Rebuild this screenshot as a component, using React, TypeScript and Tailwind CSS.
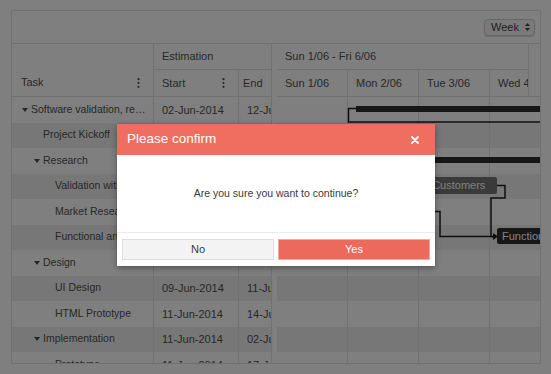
import React from "react";

type Row = {
  name: string;
  level: 0 | 1 | 2;
  parent: boolean;
  start: string;
  end: string;
};

const rows: Row[] = [
  { name: "Software validation, research and implementation", level: 0, parent: true, start: "02-Jun-2014", end: "12-Jun-2014" },
  { name: "Project Kickoff", level: 1, parent: false, start: "02-Jun-2014", end: "02-Jun-2014" },
  { name: "Research", level: 1, parent: true, start: "02-Jun-2014", end: "07-Jun-2014" },
  { name: "Validation with Customers", level: 2, parent: false, start: "02-Jun-2014", end: "04-Jun-2014" },
  { name: "Market Research", level: 2, parent: false, start: "02-Jun-2014", end: "03-Jun-2014" },
  { name: "Functional and Technical Specifications", level: 2, parent: false, start: "04-Jun-2014", end: "07-Jun-2014" },
  { name: "Design", level: 1, parent: true, start: "", end: "" },
  { name: "UI Design", level: 2, parent: false, start: "09-Jun-2014", end: "11-Jun-2014" },
  { name: "HTML Prototype", level: 2, parent: false, start: "11-Jun-2014", end: "14-Jun-2014" },
  { name: "Implementation", level: 1, parent: true, start: "11-Jun-2014", end: "02-Jul-2014" },
  { name: "Prototype", level: 2, parent: false, start: "11-Jun-2014", end: "17-Jun-2014" },
];

const indent: Record<number, string> = {
  0: "pl-[10px]",
  1: "pl-[22px]",
  2: "pl-[34px]",
};

function Kebab() {
  return (
    <svg width="3" height="10" viewBox="0 0 3 10" className="shrink-0">
      <circle cx="1.5" cy="1.2" r="1.1" fill="#4a4a4a" />
      <circle cx="1.5" cy="5" r="1.1" fill="#4a4a4a" />
      <circle cx="1.5" cy="8.8" r="1.1" fill="#4a4a4a" />
    </svg>
  );
}

function Caret() {
  return (
    <svg width="6" height="4" viewBox="0 0 6 4" className="shrink-0">
      <path d="M0 0 L6 0 L3 4 Z" fill="#4a4a4a" />
    </svg>
  );
}

const days = ["Sun 1/06", "Mon 2/06", "Tue 3/06", "Wed 4/06"];

export default function App() {
  return (
    <div
      className="relative w-[551px] h-[374px] overflow-hidden bg-white text-[11px] text-[#505050]"
      style={{ fontFamily: '"Liberation Sans", Arial, sans-serif' }}
    >
      <div className="pt-[10px] pl-[11px] pr-[10px]">
        <div className="h-[354px] border border-[#e2e2e2] flex flex-col overflow-hidden">
          {/* toolbar */}
          <div className="h-[33px] shrink-0 border-b border-[#e2e2e2] flex items-center justify-end pr-[5px]">
            <div className="w-[51px] h-[17px] rounded-[4px] border border-[#cfcfcf] bg-[#f4f4f4] shadow-[0_1px_1px_rgba(0,0,0,0.15)] flex items-center justify-between pl-[6px] pr-[4px] text-[11px] text-[#444]">
              <span>Week</span>
              <svg width="5" height="8" viewBox="0 0 5 8">
                <path d="M0 3 L2.5 0 L5 3 Z" fill="#444" />
                <path d="M0 5 L2.5 8 L5 5 Z" fill="#444" />
              </svg>
            </div>
          </div>

          <div className="flex flex-1 overflow-hidden">
            {/* grid pane */}
            <div className="w-[259px] shrink-0 overflow-hidden flex flex-col">
              <div className="h-[53px] shrink-0 flex border-b border-[#e2e2e2] w-[400px]">
                <div className="w-[142px] shrink-0 border-r border-[#e2e2e2] flex items-end">
                  <div className="h-[27px] w-full flex items-center justify-between pl-[9px] pr-[13px]">
                    <span>Task</span>
                    <Kebab />
                  </div>
                </div>
                <div className="flex flex-col">
                  <div className="h-[26px] border-b border-[#e2e2e2] flex items-center pl-[8px] w-[258px]">
                    Estimation
                  </div>
                  <div className="h-[27px] flex">
                    <div className="w-[85px] border-r border-[#e2e2e2] flex items-center justify-between pl-[8px] pr-[13px]">
                      <span>Start</span>
                      <Kebab />
                    </div>
                    <div className="w-[85px] border-r border-[#e2e2e2] flex items-center pl-[4px]">
                      End
                    </div>
                  </div>
                </div>
              </div>
              <div className="flex flex-col w-[400px]">
                {rows.map((r, i) => (
                  <div
                    key={i}
                    className={`h-[25.5px] shrink-0 flex ${i % 2 === 1 ? "bg-[#efefef]" : "bg-white"}`}
                  >
                    <div
                      className={`w-[142px] shrink-0 border-r border-[#e2e2e2] flex items-center pr-[6px] text-[10.5px] ${indent[r.level]}`}
                    >
                      <span className="w-[9px] shrink-0 flex items-center">
                        {r.parent ? <Caret /> : null}
                      </span>
                      <span className="truncate">{r.name}</span>
                    </div>
                    <div className="w-[85px] shrink-0 border-r border-[#e2e2e2] flex items-center pl-[8px]">
                      {r.start}
                    </div>
                    <div className="w-[85px] shrink-0 flex items-center pl-[8px]">
                      {r.end}
                    </div>
                  </div>
                ))}
              </div>
            </div>

            {/* splitter */}
            <div className="w-[6px] shrink-0 border-l border-[#e2e2e2] bg-white" />

            {/* timeline pane */}
            <div className="flex-1 overflow-hidden flex flex-col">
              <div className="h-[53px] shrink-0 border-b border-[#e2e2e2]">
                <div className="w-[252px] h-full border-r border-[#e2e2e2] overflow-hidden">
                  <div className="h-[26px] border-b border-[#e2e2e2] w-[426px] flex items-center pl-[8px]">
                    Sun 1/06 - Fri 6/06
                  </div>
                  <div className="h-[27px] flex w-[426px]">
                    {days.map((d) => (
                      <div
                        key={d}
                        className="w-[71px] shrink-0 border-r border-[#e2e2e2] flex items-center pl-[8px] whitespace-nowrap"
                      >
                        {d}
                      </div>
                    ))}
                  </div>
                </div>
              </div>
              <div className="relative flex-1 overflow-hidden">
                {rows.map((_, i) => (
                  <div
                    key={i}
                    className={`h-[25.5px] flex w-[300px] ${i % 2 === 1 ? "bg-[#efefef]" : "bg-white"}`}
                  >
                    {days.map((d) => (
                      <div key={d} className="w-[71px] shrink-0 border-r border-[#e2e2e2]" />
                    ))}
                  </div>
                ))}

                {/* summary bars */}
                <div className="absolute left-[79px] top-[9px] w-[300px] h-[6px] bg-[#2c2c2c]" />
                <div className="absolute left-[79px] top-[60px] w-[300px] h-[6px] bg-[#2c2c2c]" />

                {/* tasks */}
                <div className="absolute left-[78px] top-[80px] w-[142px] h-[17px] bg-[#747474] rounded-[2px] flex items-center pl-[4px] text-white overflow-hidden whitespace-nowrap">
                  Validation with Customers
                </div>
                <div className="absolute left-[78px] top-[106px] w-[75px] h-[17px] bg-[#747474] rounded-[2px] flex items-center pl-[4px] text-white overflow-hidden whitespace-nowrap">
                  Market Research
                </div>
                <div className="absolute left-[220px] top-[131px] w-[200px] h-[16px] bg-[#2e2e2e] rounded-[2px] flex items-center pl-[5px] text-white overflow-hidden whitespace-nowrap">
                  Functional and Technical Specifications
                </div>

                <svg className="absolute left-0 top-0" width="300" height="200" viewBox="0 0 300 200" fill="none">
                  <path d="M79 11.5 H71.5 V25 H300" stroke="#1c1c1c" strokeWidth="1.5" />
                  <path d="M220 88.5 H228 V101 H214 V139.5 H216" stroke="#1c1c1c" strokeWidth="1.5" />
                  <path d="M153 114.5 H163 V139.5 H216" stroke="#1c1c1c" strokeWidth="1.5" />
                  <path d="M216 136 L221 139.5 L216 143 Z" fill="#1c1c1c" />
                </svg>
              </div>
            </div>
          </div>
        </div>
      </div>

      {/* modal overlay */}
      <div className="absolute inset-0 bg-black/50" />

      {/* dialog */}
      <div className="absolute left-[117px] top-[124px] w-[318px] h-[142px] bg-white shadow-[0_2px_6px_rgba(0,0,0,0.35)] flex flex-col">
        <div className="h-[31px] shrink-0 bg-[#f06e60] flex items-center justify-between pl-[10px] pr-[16px]">
          <span className="text-[13.5px] text-white">Please confirm</span>
          <svg width="8" height="8" viewBox="0 0 8 8">
            <path d="M1 1 L7 7 M7 1 L1 7" stroke="white" strokeWidth="1.8" strokeLinecap="round" />
          </svg>
        </div>
        <div className="h-[77px] shrink-0 flex items-center justify-center text-[10.5px] text-[#3a3a3a]">
          Are you sure you want to continue?
        </div>
        <div className="flex-1 border-t border-[#ececec] flex gap-[4px] px-[5px] pt-[6px]">
          <button className="w-[152px] h-[21px] bg-[#f3f3f3] border border-[#dcdcdc] text-[11px] text-[#3a3a3a]">
            No
          </button>
          <button className="w-[152px] h-[21px] bg-[#ec6a5c] border border-[#f6a79e] text-[11px] text-white">
            Yes
          </button>
        </div>
      </div>
    </div>
  );
}
